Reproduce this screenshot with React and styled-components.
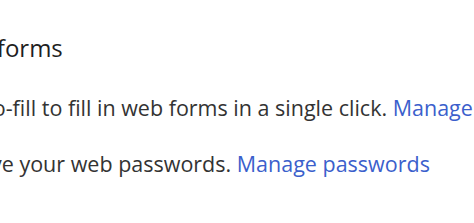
import React from 'react';
import styled, { createGlobalStyle } from 'styled-components';

const GlobalStyle = createGlobalStyle`
  html, body {
    margin: 0;
    padding: 0;
    background: #fff;
    overflow: hidden;
  }
`;

const Page = styled.div`
  width: 474px;
  height: 223px;
  overflow: hidden;
  background: #fff;
`;

const Section = styled.section`
  margin-left: -115px;
  padding-top: 34px;
  font-family: 'Open Sans', 'Noto Sans', sans-serif;
  white-space: nowrap;
`;

const Heading = styled.h3`
  margin: 0 0 0 -63px;
  font-size: 24px;
  font-weight: 400;
  line-height: 28px;
  color: #1f1f1f;
`;

const Row = styled.p`
  margin: ${({ $first }) => ($first ? '32px' : '28px')} 0 0;
  font-size: 21.5px;
  line-height: 28px;
  color: #333;
`;

const Link = styled.a`
  color: #3b5fcc;
  text-decoration: none;
`;

export default function App() {
  return (
    <Page>
      <GlobalStyle />
      <Section>
        <Heading>Passwords and forms</Heading>
        <Row $first>
          Enable Auto-fill to fill in web forms in a single click.{' '}
          <Link href="#">Manage Auto-fill settings</Link>
        </Row>
        <Row>
          Offer to save your web passwords. <Link href="#">Manage passwords</Link>
        </Row>
      </Section>
    </Page>
  );
}
